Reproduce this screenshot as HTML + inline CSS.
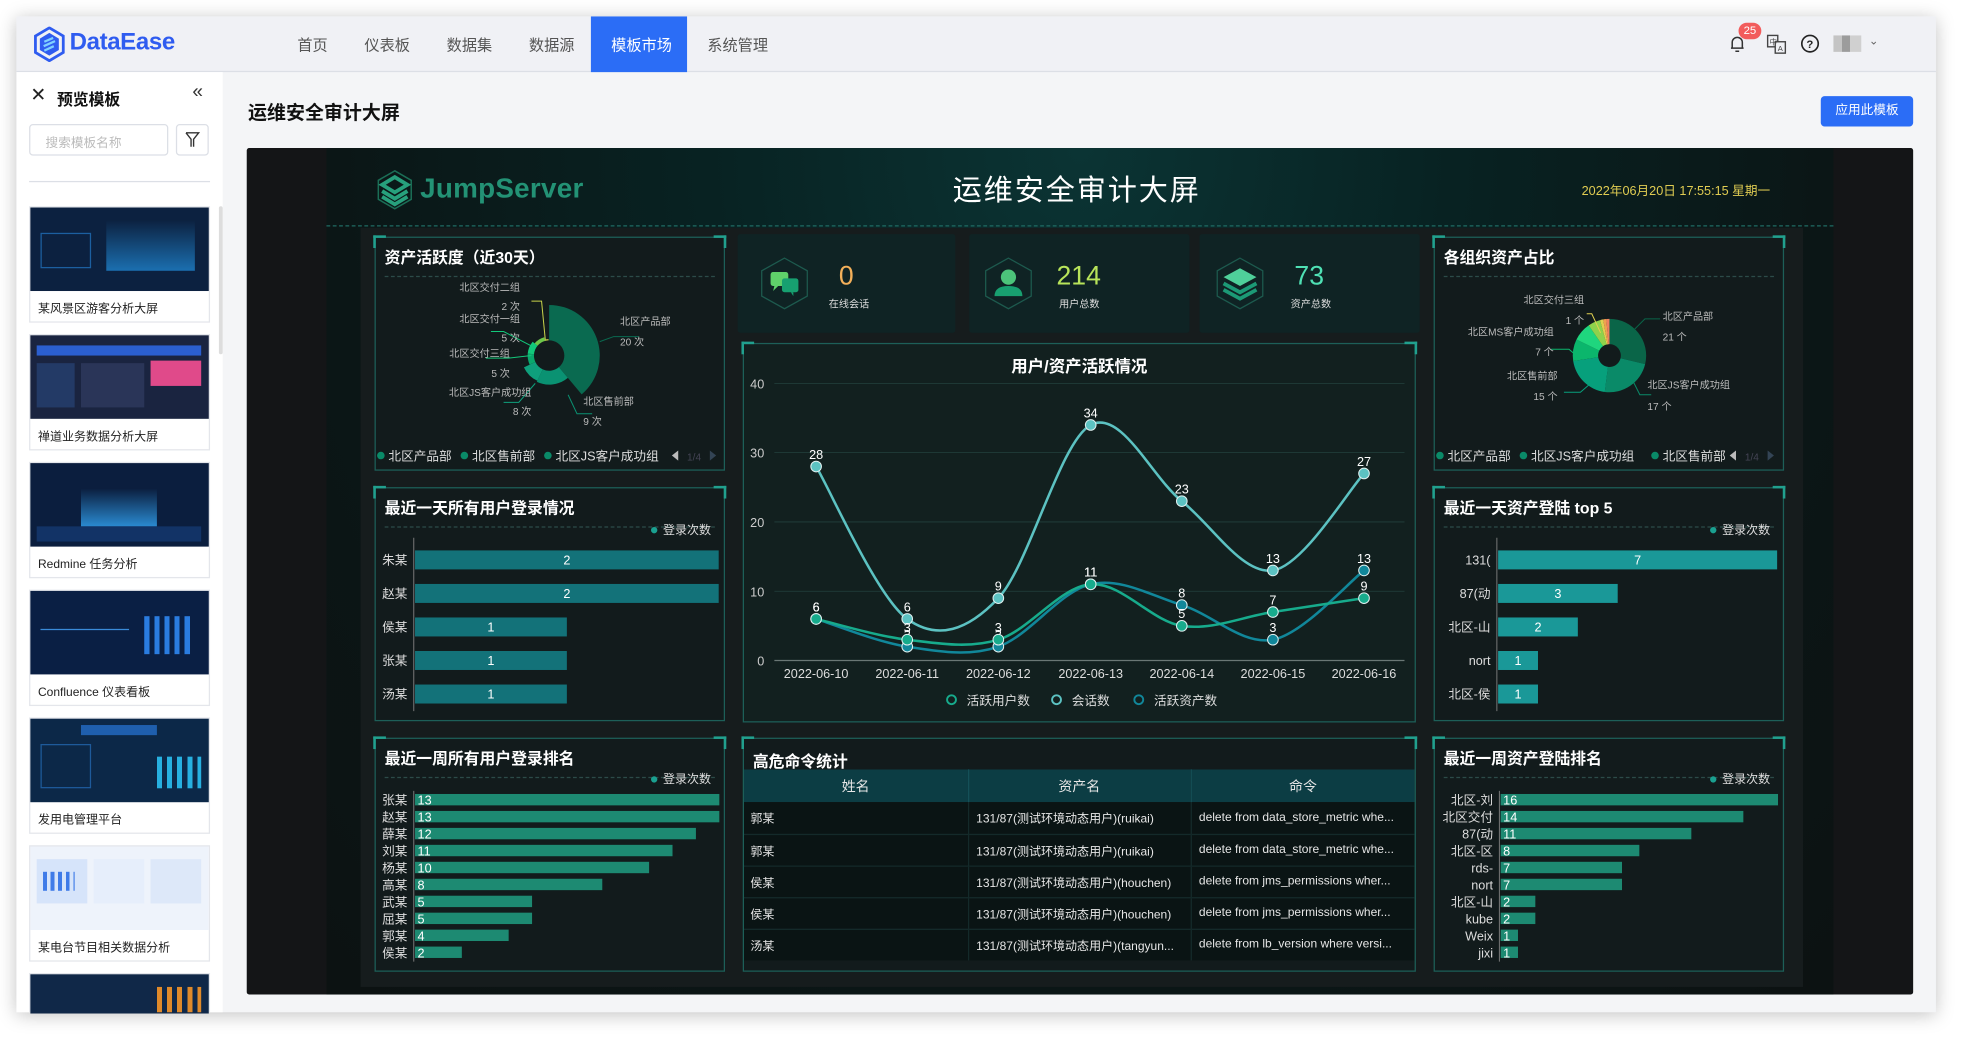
<!DOCTYPE html>
<html><head><meta charset="utf-8">
<style>
*{box-sizing:border-box;margin:0;padding:0}
html,body{width:1984px;height:1063px;overflow:hidden;background:#fff;font-family:"Liberation Sans","Noto Sans CJK SC",sans-serif}
#w{position:absolute;left:0;top:0;width:1568px;height:840px;transform:scale(1.26531);transform-origin:0 0}
.a{position:absolute}
.win{left:13px;top:13px;width:1517px;height:787px;background:#f4f5f7;box-shadow:0 2px 14px rgba(0,0,0,.25)}
.hdr{left:13px;top:13px;width:1517px;height:44px;background:#f0f1f5;border-bottom:1px solid #dcdfe6}
.nav{top:27px;font-size:12px;color:#555}
.side{left:13px;top:57px;width:163px;height:743px;background:#fff}
.th{left:23px;width:143px;height:92px;border:1px solid #e4e6eb;background:#fff}
.th .im{position:absolute;left:0;top:0;width:141px;height:66px;background:#0e1f3c;overflow:hidden}
.th .lb{position:absolute;left:6px;top:72px;font-size:9.5px;color:#222}
.pn{background:#121b1c;border:1px solid #1d5f58}
.pn:before,.pn:after{content:"";position:absolute;width:8px;height:8px;border:2px solid #21a08e;top:-2px}
.pn:before{left:-2px;border-right:none;border-bottom:none}
.pn:after{right:-2px;border-left:none;border-bottom:none}
.pt{position:absolute;left:7px;top:5px;font-size:12.5px;color:#fff;font-weight:bold}
.dl{position:absolute;left:7px;right:7px;top:30px;border-top:1px dashed #2c4b48}
.card{background:#0f2324;border-radius:2px}
td,th{font-weight:normal;white-space:nowrap;overflow:hidden}
</style></head><body>
<div id="w">
<div class="a win"></div>
<div class="a hdr"></div>
<svg class="a" style="left:26px;top:21px" width="26" height="28" viewBox="0 0 26 28"><path d="M13 1 L24 7.5 L24 20.5 L13 27 L2 20.5 L2 7.5Z" fill="none" stroke="#2f5cf0" stroke-width="2.2"/><path d="M13 5 L20.5 9.5 L20.5 18.5 L13 23 L5.5 18.5 L5.5 9.5Z" fill="#2f5cf0"/><path d="M9 12 L16 9 M8.5 15.5 L17.5 11.5 M9 19 L16.5 15.5" stroke="#7fd0ff" stroke-width="1.8"/></svg>
<div class="a" style="left:55px;top:23px;font-size:19px;font-weight:bold;color:#2f5cf0;letter-spacing:-.3px">DataEase</div>
<div class="a nav" style="left:235px">首页</div>
<div class="a nav" style="left:288px">仪表板</div>
<div class="a nav" style="left:353px">数据集</div>
<div class="a nav" style="left:418px">数据源</div>
<div class="a" style="left:467px;top:13px;width:76px;height:44px;background:#2b6df6"></div>
<div class="a nav" style="left:483px;color:#fff">模板市场</div>
<div class="a nav" style="left:559px">系统管理</div>
<svg class="a" style="left:1366px;top:27px" width="14" height="16" viewBox="0 0 14 16"><path d="M3 11 V6.5 a4 4 0 0 1 8 0 V11 Z M2 11 H12 M5.5 13.5 H8.5" fill="none" stroke="#333" stroke-width="1.2"/></svg>
<div class="a" style="left:1374px;top:18px;width:18px;height:13px;border-radius:7px;background:#f25c5c;color:#fff;font-size:9px;text-align:center;line-height:13px">25</div>
<svg class="a" style="left:1396px;top:27px" width="16" height="16" viewBox="0 0 16 16"><rect x="1" y="1" width="8" height="9" fill="none" stroke="#444" stroke-width="1.1"/><rect x="7" y="6" width="8" height="9" fill="#f0f1f5" stroke="#444" stroke-width="1.1"/><text x="2.5" y="8" font-size="6" fill="#444">中</text><text x="9" y="13.5" font-size="6" fill="#444">A</text></svg>
<svg class="a" style="left:1423px;top:27px" width="15" height="15" viewBox="0 0 15 15"><circle cx="7.5" cy="7.5" r="6.5" fill="none" stroke="#222" stroke-width="1.3"/><text x="4.6" y="11" font-size="9" font-weight="bold" fill="#222">?</text></svg>
<div class="a" style="left:1449px;top:28px;width:22px;height:13px;background:linear-gradient(90deg,#c4c4c4 0 30%,#9c9c9c 30% 60%,#d0d0d0 60%)"></div>
<div class="a" style="left:1477px;top:27px;font-size:9px;color:#666">⌄</div>

<div class="a side"></div>
<div class="a" style="left:24px;top:66px;font-size:15px;color:#222">✕</div>
<div class="a" style="left:45px;top:68px;font-size:12.5px;color:#111;font-weight:bold">预览模板</div>
<div class="a" style="left:152px;top:64px;font-size:15px;color:#333">«</div>
<div class="a" style="left:23px;top:98px;width:110px;height:25px;border:1px solid #dcdfe6;border-radius:3px;font-size:10px;color:#bbb;padding:5px 0 0 12px">搜索模板名称</div>
<div class="a" style="left:139px;top:98px;width:26px;height:25px;border:1px solid #dcdfe6;border-radius:3px"></div>
<svg class="a" style="left:146px;top:104px" width="12" height="13" viewBox="0 0 12 13"><path d="M1 1 H11 L7 6 V12 M5 12 V6 L1 1" fill="none" stroke="#333" stroke-width="1.1"/></svg>
<div class="a" style="left:23px;top:143px;width:143px;height:1px;background:#dcdfe6"></div>
<div class="a" style="left:173px;top:163px;width:3px;height:117px;background:#ddd;border-radius:2px"></div>

<div class="a th" style="top:163px"><div class="im" style="background:#0c2140"><div class="a" style="left:8px;top:20px;width:40px;height:28px;border:1px solid #1c5fa0"></div><div class="a" style="left:60px;top:10px;width:70px;height:40px;background:linear-gradient(180deg,#0c2140,#1b6fb0)"></div></div><div class="lb">某风景区游客分析大屏</div></div>
<div class="a th" style="top:264px"><div class="im" style="background:#1a2440"><div class="a" style="left:5px;top:8px;width:130px;height:8px;background:#2b5fd0"></div><div class="a" style="left:95px;top:20px;width:40px;height:20px;background:#e04a8a"></div><div class="a" style="left:5px;top:22px;width:30px;height:35px;background:#233a66"></div><div class="a" style="left:40px;top:22px;width:50px;height:35px;background:#2a3558"></div></div><div class="lb">禅道业务数据分析大屏</div></div>
<div class="a th" style="top:365px"><div class="im" style="background:#0b1e3e"><div class="a" style="left:40px;top:20px;width:60px;height:30px;background:linear-gradient(180deg,#0b1e3e,#2a8ad0)"></div><div class="a" style="left:5px;top:50px;width:130px;height:12px;background:#123366"></div></div><div class="lb">Redmine 任务分析</div></div>
<div class="a th" style="top:466px"><div class="im" style="background:#0a1f44"><div class="a" style="left:90px;top:20px;width:40px;height:30px;background:repeating-linear-gradient(90deg,#2a7ce0 0 4px,transparent 4px 8px)"></div><div class="a" style="left:8px;top:30px;width:70px;height:24px;border-top:1px solid #3a8ad8"></div></div><div class="lb">Confluence 仪表看板</div></div>
<div class="a th" style="top:567px"><div class="im" style="background:#0c2848"><div class="a" style="left:40px;top:5px;width:60px;height:8px;background:#1f5fae"></div><div class="a" style="left:100px;top:30px;width:35px;height:25px;background:repeating-linear-gradient(90deg,#27b0e0 0 4px,transparent 4px 8px)"></div><div class="a" style="left:8px;top:20px;width:40px;height:35px;border:1px solid #1e5a9a"></div></div><div class="lb">发用电管理平台</div></div>
<div class="a th" style="top:668px"><div class="im" style="background:#eef3fb"><div class="a" style="left:5px;top:10px;width:40px;height:35px;background:#d6e4fa"></div><div class="a" style="left:50px;top:10px;width:40px;height:35px;background:#e6eefb"></div><div class="a" style="left:95px;top:10px;width:40px;height:35px;background:#dde8f9"></div><div class="a" style="left:10px;top:20px;width:25px;height:15px;background:repeating-linear-gradient(90deg,#3f7be8 0 3px,transparent 3px 6px)"></div></div><div class="lb">某电台节目相关数据分析</div></div>
<div class="a th" style="top:769px;height:31px;border-bottom:none"><div class="im" style="height:31px;background:#102848"><div class="a" style="left:100px;top:10px;width:35px;height:20px;background:repeating-linear-gradient(90deg,#e08a2a 0 4px,transparent 4px 8px)"></div></div></div>

<div class="a" style="left:196px;top:78px;font-size:15px;color:#111;font-weight:bold">运维安全审计大屏</div>
<div class="a" style="left:1439px;top:76px;width:73px;height:24px;background:#2b6df6;border-radius:3px;color:#fff;font-size:10px;text-align:center;line-height:24px">应用此模板</div>

<div class="a" style="left:195px;top:117px;width:1317px;height:669px;background:#141517;border-radius:2px"></div>
<div class="a" style="left:258px;top:117px;width:1191px;height:669px;background:radial-gradient(ellipse at 50% 0%,#0b3434 0%,#082222 35%,#0b1616 70%,#0c1212 100%)"></div>
<div class="a" style="left:258px;top:178px;width:1191px;height:0;border-top:1px dashed #1f6a62"></div>
<div class="a" style="left:285px;top:180px;width:1140px;height:600px;background:#161c1d"></div>
<svg class="a" style="left:297px;top:134px" width="30" height="32" viewBox="0 0 30 32"><path d="M15 1 L28 8.5 L28 23.5 L15 31 L2 23.5 L2 8.5Z" fill="none" stroke="#1b6e56" stroke-width="1.2"/><path d="M5 12 L15 6 L25 12 L15 18Z M5 17 L15 23 L25 17 M5 21.5 L15 27.5 L25 21.5" fill="none" stroke="#27a07c" stroke-width="3"/></svg>
<div class="a" style="left:332px;top:136px;font-size:22px;font-weight:bold;color:#239275;letter-spacing:.2px">JumpServer</div>
<div class="a" style="left:753px;top:131px;font-size:23px;color:#fff;letter-spacing:1.5px">运维安全审计大屏</div>
<div class="a" style="left:1250px;top:142px;font-size:10px;color:#e0cc52">2022年06月20日 17:55:15 星期一</div>

<div class="a pn" style="left:296px;top:187px;width:277px;height:185px"><div class="pt">资产活跃度（近30天）</div><div class="dl"></div></div>
<div class="a pn" style="left:296px;top:385px;width:277px;height:185px"><div class="pt">最近一天所有用户登录情况</div><div class="dl"></div></div>
<div class="a pn" style="left:296px;top:583px;width:277px;height:185px"><div class="pt">最近一周所有用户登录排名</div><div class="dl"></div></div>
<div class="a pn" style="left:1133px;top:187px;width:277px;height:185px"><div class="pt">各组织资产占比</div><div class="dl"></div></div>
<div class="a pn" style="left:1133px;top:385px;width:277px;height:185px"><div class="pt">最近一天资产登陆 top 5</div><div class="dl"></div></div>
<div class="a pn" style="left:1133px;top:583px;width:277px;height:185px"><div class="pt">最近一周资产登陆排名</div><div class="dl"></div></div>
<div class="a pn" style="left:587px;top:271px;width:532px;height:300px;background:#12201f"></div>
<div class="a" style="left:587px;top:279px;width:532px;text-align:center;font-size:13px;color:#fff;font-weight:bold">用户/资产活跃情况</div>
<div class="a pn" style="left:587px;top:583px;width:532px;height:185px"><div class="pt" style="top:7px">高危命令统计</div></div>

<div class="a card" style="left:583px;top:185px;width:172px;height:78px"></div>
<div class="a card" style="left:766px;top:185px;width:174px;height:78px"></div>
<div class="a card" style="left:948px;top:185px;width:174px;height:78px"></div>
<svg class="a" style="left:600px;top:203px" width="40" height="42" viewBox="0 0 40 42"><path d="M20 1 L38 11 L38 31 L20 41 L2 31 L2 11Z" fill="none" stroke="#1d5a4e" stroke-width="1"/><rect x="9" y="12" width="14" height="11" rx="2" fill="#5fd16a"/><path d="M12 23 L11 27 L15 23Z" fill="#5fd16a"/><rect x="18" y="17" width="13" height="11" rx="2" fill="#17a070"/><path d="M25 28 L27 31 L27 28Z" fill="#17a070"/></svg>
<div class="a" style="left:663px;top:207px;font-size:21px;color:#f3b05a">0</div>
<div class="a" style="left:655px;top:235px;font-size:8px;color:#ddd">在线会话</div>
<svg class="a" style="left:777px;top:203px" width="40" height="42" viewBox="0 0 40 42"><path d="M20 1 L38 11 L38 31 L20 41 L2 31 L2 11Z" fill="none" stroke="#1d5a4e" stroke-width="1"/><circle cx="20" cy="16" r="6" fill="#4cc47a"/><path d="M9 31 Q9 23 20 23 Q31 23 31 31Z" fill="#18a070"/></svg>
<div class="a" style="left:835px;top:207px;font-size:21px;color:#b8e45a">214</div>
<div class="a" style="left:837px;top:235px;font-size:8px;color:#ddd">用户总数</div>
<svg class="a" style="left:960px;top:203px" width="40" height="42" viewBox="0 0 40 42"><path d="M20 1 L38 11 L38 31 L20 41 L2 31 L2 11Z" fill="none" stroke="#1d5a4e" stroke-width="1"/><path d="M7 16 L20 9 L33 16 L20 23Z" fill="#4fd09a"/><path d="M7 21 L20 28 L33 21 M7 26 L20 33 L33 26" fill="none" stroke="#1c9a76" stroke-width="3"/></svg>
<div class="a" style="left:1023px;top:207px;font-size:21px;color:#4fe0b4">73</div>
<div class="a" style="left:1020px;top:235px;font-size:8px;color:#ddd">资产总数</div>

<table class="a" style="left:588px;top:608px;width:530px;border-collapse:collapse;font-size:9.5px;color:#e6e6e6;table-layout:fixed">
<colgroup><col style="width:177px"><col style="width:176px"><col style="width:177px"></colgroup>
<tr style="background:#0c3d44;height:26px;font-size:11px"><th style="border-right:1px solid #145058">姓名</th><th style="border-right:1px solid #145058">资产名</th><th>命令</th></tr>
<tr style="background:#0a1414;height:25px;border-bottom:1px solid #142a2a"><td style="padding-left:5px">郭某</td><td style="padding-left:6px;border-left:1px solid #142a2a">131/87(测试环境动态用户)(ruikai)</td><td style="padding-left:6px;border-left:1px solid #142a2a">delete from data_store_metric whe...</td></tr>
<tr style="background:#0a1414;height:25px;border-bottom:1px solid #142a2a"><td style="padding-left:5px">郭某</td><td style="padding-left:6px;border-left:1px solid #142a2a">131/87(测试环境动态用户)(ruikai)</td><td style="padding-left:6px;border-left:1px solid #142a2a">delete from data_store_metric whe...</td></tr>
<tr style="background:#0a1414;height:25px;border-bottom:1px solid #142a2a"><td style="padding-left:5px">侯某</td><td style="padding-left:6px;border-left:1px solid #142a2a">131/87(测试环境动态用户)(houchen)</td><td style="padding-left:6px;border-left:1px solid #142a2a">delete from jms_permissions wher...</td></tr>
<tr style="background:#0a1414;height:25px;border-bottom:1px solid #142a2a"><td style="padding-left:5px">侯某</td><td style="padding-left:6px;border-left:1px solid #142a2a">131/87(测试环境动态用户)(houchen)</td><td style="padding-left:6px;border-left:1px solid #142a2a">delete from jms_permissions wher...</td></tr>
<tr style="background:#0a1414;height:25px"><td style="padding-left:5px">汤某</td><td style="padding-left:6px;border-left:1px solid #142a2a">131/87(测试环境动态用户)(tangyun...</td><td style="padding-left:6px;border-left:1px solid #142a2a">delete from lb_version where versi...</td></tr>
</table>

<svg id="g" class="a" style="left:0;top:0" width="1568" height="840" viewBox="0 0 1568 840" font-family="Liberation Sans, Noto Sans CJK SC, sans-serif"></svg>
</div>
<script>
var g=document.getElementById('g'),h='';
function T(x,y,s,fs,c,anc){h+='<text x="'+x+'" y="'+y+'" font-size="'+fs+'" fill="'+c+'"'+(anc?' text-anchor="'+anc+'"':'')+'>'+s+'</text>';}
function R(x,y,w,hh,c){h+='<rect x="'+x+'" y="'+y+'" width="'+w+'" height="'+hh+'" fill="'+c+'"/>';}
var xs=[645,717,789,862,934,1006,1078],dates=['2022-06-10','2022-06-11','2022-06-12','2022-06-13','2022-06-14','2022-06-15','2022-06-16'];
[40,30,20,10,0].forEach(function(v,i){var y=522-v*5.475;h+='<line x1="612" x2="1110" y1="'+y+'" y2="'+y+'" stroke="'+(v?'#23403d':'#6a7775')+'" stroke-width="'+(v?0.6:1)+'"/>';T(604,y+4,v,10,'#ccc','end');});
xs.forEach(function(x,i){T(x,536,dates[i],10,'#ddd','middle');});
function P(vals){var p=vals.map(function(v,i){return [xs[i],522-v*5.475]});var d='M'+p[0];for(var i=0;i<p.length-1;i++){var p0=p[i-1]||p[i],p1=p[i],p2=p[i+1],p3=p[i+2]||p2;d+=' C'+(p1[0]+(p2[0]-p0[0])/6)+','+(p1[1]+(p2[1]-p0[1])/6)+' '+(p2[0]-(p3[0]-p1[0])/6)+','+(p2[1]-(p3[1]-p1[1])/6)+' '+p2[0]+','+p2[1];}return [d,p];}
[[[28,6,9,34,23,13,27],'#5cc2c2'],[[6,2,2,11,8,3,13],'#11879a'],[[6,3,3,11,5,7,9],'#17ab8c']].forEach(function(s){var r=P(s[0]);h+='<path d="'+r[0]+'" fill="none" stroke="'+s[1]+'" stroke-width="2"/>';r[1].forEach(function(q,i){h+='<circle cx="'+q[0]+'" cy="'+q[1]+'" r="4.2" fill="'+s[1]+'" stroke="#e0f0f0" stroke-width="0.8"/>';T(q[0],q[1]-6,s[0][i],10,'#fff','middle');});});
[[752,'活跃用户数','#17ab8c'],[835,'会话数','#5cc2c2'],[900,'活跃资产数','#11879a']].forEach(function(l){h+='<circle cx="'+l[0]+'" cy="553" r="3.5" fill="none" stroke="'+l[2]+'" stroke-width="1.5"/>';T(l[0]+12,557,l[1],10,'#ddd');});
function leg(x,y){h+='<circle cx="'+x+'" cy="'+(y-3)+'" r="2.5" fill="#1aa090"/>';T(x+7,y,'登录次数',9.5,'#ddd');}
leg(517,422);
[['朱某',2],['赵某',2],['侯某',1],['张某',1],['汤某',1]].forEach(function(b,i){var y=442+i*26.5;R(328,y-7,b[1]*120,15,'#137279');T(322,y+4,b[0],10,'#ddd','end');T(328+b[1]*60,y+4,b[1],10,'#fff','middle');});
h+='<line x1="327" x2="327" y1="425" y2="562" stroke="#777" stroke-width="0.8"/>';
leg(517,619);
[['张某',13],['赵某',13],['薛某',12],['刘某',11],['杨某',10],['高某',8],['武某',5],['屈某',5],['郭某',4],['侯某',2]].forEach(function(b,i){var y=632+i*13.4;R(328,y-4.5,b[1]*18.5,9,'#1d8a72');T(322,y+4,b[0],10,'#ddd','end');T(330,y+4,b[1],10,'#fff');});
h+='<line x1="327" x2="327" y1="625" y2="760" stroke="#777" stroke-width="0.8"/>';
leg(1354,422);
[['131(',7],['87(动',3],['北区-山',2],['nort',1],['北区-侯',1]].forEach(function(b,i){var y=442+i*26.5;R(1184,y-7,b[1]*31.5,15,'#1a9898');T(1178,y+4,b[0],10,'#ddd','end');T(1184+b[1]*15.75,y+4,b[1],10,'#fff','middle');});
h+='<line x1="1183" x2="1183" y1="425" y2="562" stroke="#777" stroke-width="0.8"/>';
leg(1354,619);
[['北区-刘',16],['北区交付',14],['87(动',11],['北区-区',8],['rds-',7],['nort',7],['北区-山',2],['kube',2],['Weix',1],['jixi',1]].forEach(function(b,i){var y=632+i*13.4;R(1186,y-4.5,b[1]*13.7,9,'#1d8a72');T(1180,y+4,b[0],10,'#ddd','end');T(1188,y+4,b[1],10,'#fff');});
h+='<line x1="1185" x2="1185" y1="625" y2="760" stroke="#777" stroke-width="0.8"/>';
function W(cx,cy,r0,r1,a0,a1,c){function pt(r,a){a=(a-90)*Math.PI/180;return (cx+r*Math.cos(a)).toFixed(2)+','+(cy+r*Math.sin(a)).toFixed(2);}var lg=(a1-a0)>180?1:0;h+='<path d="M'+pt(r1,a0)+' A'+r1+','+r1+' 0 '+lg+' 1 '+pt(r1,a1)+' L'+pt(r0,a1)+' A'+r0+','+r0+' 0 '+lg+' 0 '+pt(r0,a0)+'Z" fill="'+c+'"/>';}
W(434,281,12,40,0,140,'#0a6a50');W(434,281,12,23,140,205,'#0a9272');W(434,281,12,22,205,245,'#0fa07c');W(434,281,12,17,245,275,'#0aa86c');W(434,281,12,17,275,310,'#12c87a');W(434,281,12,15,310,345,'#6dc64a');W(434,281,12,13,345,358,'#c8d24a');
var tot=73,a=0;[[21,'#0a6548'],[17,'#0a8a68'],[15,'#07a07c'],[7,'#0bb66c'],[6,'#1fd67e'],[4,'#8ed24c'],[1,'#e0d050'],[1,'#f0a050'],[1,'#f08060']].forEach(function(s){var b=a+s[0]/tot*360;W(1272,281,9,29,a,b,s[1]);a=b;});
function L(pts,c){h+='<polyline points="'+pts+'" fill="none" stroke="'+c+'" stroke-width="0.8"/>';}
L('474,270 485,266 505,266','#0a6a50');L('449,312 456,327 468,327','#0a9272');L('423,303 410,318 398,318','#0fa07c');L('420,281 402,283 384,283','#12c87a');L('423,275 398,262 388,262','#12c87a');L('431,269 428,238 420,238','#c8d24a');
[[490,257,'北区产品部'],[490,273,'20 次'],[461,320,'北区售前部'],[461,336,'9 次'],[420,313,'北区JS客户成功组','end'],[420,328,'8 次','end'],[403,282,'北区交付三组','end'],[403,298,'5 次','end'],[411,255,'北区交付一组','end'],[411,270,'5 次','end'],[411,230,'北区交付二组','end'],[411,245,'2 次','end']].forEach(function(t){T(t[0],t[1],t[2],8,'#bbb',t[3]);});
L('1292,260 1300,252 1312,252','#0a6548');L('1290,300 1296,312 1305,312','#0a8a68');L('1256,304 1249,310 1236,310','#07a07c');L('1247,282 1240,276 1226,276','#0bb66c');L('1265,263 1258,248 1254,248','#e0d050');
[[1314,253,'北区产品部'],[1314,269,'21 个'],[1302,307,'北区JS客户成功组'],[1302,324,'17 个'],[1231,300,'北区售前部','end'],[1231,316,'15 个','end'],[1228,265,'北区MS客户成功组','end'],[1228,281,'7 个','end'],[1252,240,'北区交付三组','end'],[1252,256,'1 个','end']].forEach(function(t){T(t[0],t[1],t[2],8,'#bbb',t[3]);});
function PL(x,items){var cx=x;items.forEach(function(s){h+='<circle cx="'+(cx+3)+'" cy="360" r="3" fill="#0a8a68"/>';T(cx+9,364,s,10,'#ddd');cx+=s.length*10+(s.indexOf('JS')>=0?-2:0)+16;});}
PL(298,['北区产品部','北区售前部','北区JS客户成功组']);
h+='<path d="M536 356 L531 360 L536 364Z" fill="#bbb"/><text x="543" y="364" font-size="8" fill="#445">1/4</text><path d="M561 356 L566 360 L561 364Z" fill="#345"/>';
PL(1135,['北区产品部','北区JS客户成功组','北区售前部']);
h+='<path d="M1372 356 L1367 360 L1372 364Z" fill="#bbb"/><text x="1379" y="364" font-size="8" fill="#445">1/4</text><path d="M1397 356 L1402 360 L1397 364Z" fill="#345"/>';
g.innerHTML=h;
</script>
</body></html>
